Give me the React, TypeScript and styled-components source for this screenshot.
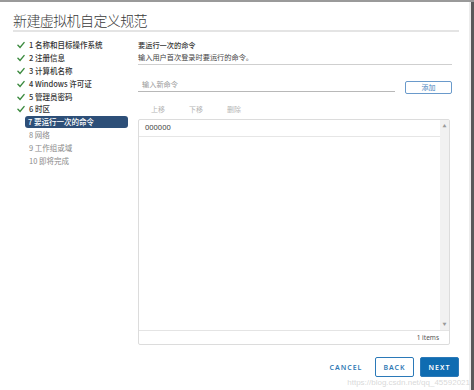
import React from 'react';
import styled, { createGlobalStyle } from 'styled-components';

const GlobalStyle = createGlobalStyle`
  html, body {
    margin: 0;
    padding: 0;
    background: #ffffff;
  }
  body {
    font-family: "Noto Sans CJK SC", "Noto Sans", "Liberation Sans", sans-serif;
    color: #333;
  }
`;

const Screen = styled.div`
  width: 474px;
  height: 390px;
  position: relative;
  overflow: hidden;
  background: #fff;
  border-top: 2px solid #9a9a9a;
  box-sizing: border-box;
  display: flex;
`;

const Dialog = styled.div`
  flex: 1;
  display: flex;
  flex-direction: column;
  padding: 0 10px 0 13px;
  border-right: 2px solid #ececec;
`;

const EdgeBar = styled.div`
  width: 3px;
  background: #5a5a5a;
`;

const Title = styled.h1`
  margin: 0;
  padding: 8px 0 0;
  font-size: 14px;
  letter-spacing: -0.6px;
  font-weight: 300;
  line-height: 20px;
  color: #3a3a3a;
  border-bottom: 2px solid #e4e4e4;
`;

const Body = styled.div`
  display: flex;
  flex: 1;
  padding-top: 7px;
`;

const Nav = styled.ul`
  list-style: none;
  margin: 0;
  padding: 0 0 0 4px;
  width: 121px;
  display: flex;
  flex-direction: column;
`;

const NavItem = styled.li<{ $state: 'done' | 'active' | 'todo' }>`
  display: flex;
  align-items: center;
  height: 12.8px;
  font-size: 7.5px;
  line-height: 12px;
  white-space: nowrap;
  color: ${p => (p.$state === 'todo' ? '#8a8a8a' : p.$state === 'active' ? '#fff' : '#333')};
  font-weight: ${p => (p.$state === 'todo' ? 400 : 500)};
  padding-left: ${p => (p.$state === 'done' ? '0' : '12px')};
  ${p =>
    p.$state === 'active' &&
    `
    background: #2d4f78;
    border-radius: 3px;
    padding-left: 3px;
    width: 100px;
    height: 12px;
    margin: 0.4px 0 0.4px 8px;
  `}
`;

const Check = styled.svg`
  width: 8px;
  height: 8px;
  margin-right: 4px;
  flex: none;
`;

const Content = styled.div`
  flex: 1;
  display: flex;
  flex-direction: column;
`;

const Heading = styled.div`
  font-size: 7.2px;
  line-height: 12px;
  color: #333;
  font-weight: 500;
`;

const Sub = styled.div`
  font-size: 7.2px;
  line-height: 12px;
  color: #444;
  padding-bottom: 1px;
  border-bottom: 1px solid #cfcfcf;
  margin-right: 7px;
`;

const InputRow = styled.div`
  display: flex;
  align-items: flex-end;
  margin-top: 13px;
  gap: 10px;
`;

const CommandInput = styled.div`
  flex: 1;
  font-size: 7.2px;
  color: #9a9a9a;
  padding: 0 0 1px 4px;
  line-height: 12px;
  border-bottom: 1px solid #b8b8b8;
`;

const AddButton = styled.button`
  width: 47px;
  height: 13px;
  margin-right: 7px;
  margin-bottom: -2px;
  padding: 0;
  border: 1px solid #6a9acb;
  border-radius: 2px;
  background: #fff;
  color: #4a86c0;
  font-family: inherit;
  font-size: 7px;
  line-height: 11px;
`;

const Actions = styled.div`
  display: flex;
  gap: 24px;
  padding: 0 0 0 13px;
  margin-top: 11px;
  height: 12px;
  font-size: 7px;
  line-height: 12px;
  color: #b5b5b5;
`;

const Table = styled.div`
  margin-top: 4px;
  margin-right: 9px;
  height: 226px;
  box-sizing: border-box;
  border: 1px solid #dcdcdc;
  border-radius: 2px;
  display: flex;
  flex-direction: column;
`;

const TableBody = styled.div`
  flex: 1;
  display: flex;
`;

const Rows = styled.div`
  flex: 1;
`;

const Row = styled.div`
  height: 17px;
  padding-left: 6px;
  font-size: 7.5px;
  line-height: 14px;
  color: #444;
  border-bottom: 1px solid #e6e6e6;
  font-family: "Noto Sans", "Liberation Sans", sans-serif;
  box-sizing: border-box;
`;

const Scroll = styled.div`
  width: 9px;
  background: #f1f1f1;
  display: flex;
  flex-direction: column;
  justify-content: space-between;
  align-items: center;
  padding: 3px 0;
  font-size: 4px;
  color: #999;
`;

const Footer = styled.div`
  height: 13px;
  border-top: 1px solid #e4e4e4;
  font-size: 6.5px;
  line-height: 13px;
  text-align: right;
  padding-right: 10px;
  color: #555;
  font-family: "Noto Sans", "Liberation Sans", sans-serif;
`;

const ButtonBar = styled.div`
  display: flex;
  justify-content: flex-end;
  align-items: center;
  gap: 6px;
  height: 20px;
  margin-top: 12px;
`;

const FlatButton = styled.button<{ $variant: 'link' | 'outline' | 'solid' }>`
  height: 20px;
  width: ${p => (p.$variant === 'link' ? '46px' : '39px')};
  padding: 0;
  border-radius: 2px;
  font-family: "Noto Sans", "Liberation Sans", sans-serif;
  font-size: 7px;
  font-weight: 600;
  letter-spacing: 1px;
  border: 1px solid ${p => (p.$variant === 'link' ? 'transparent' : '#2b79b8')};
  background: ${p => (p.$variant === 'solid' ? '#0f6cb1' : '#fff')};
  color: ${p => (p.$variant === 'solid' ? '#fff' : '#3079b5')};
`;

const Watermark = styled.div`
  position: absolute;
  right: 4px;
  bottom: 2px;
  font-size: 8px;
  line-height: 10px;
  color: rgba(200, 200, 200, 0.7);
  font-family: "Liberation Sans", sans-serif;
`;

const steps = [
  '1 名称和目标操作系统',
  '2 注册信息',
  '3 计算机名称',
  '4 Windows 许可证',
  '5 管理员密码',
  '6 时区',
  '7 要运行一次的命令',
  '8 网络',
  '9 工作组或域',
  '10 即将完成',
];

const CheckIcon = () => (
  <Check viewBox="0 0 10 10">
    <path d="M1.2 5.4 L3.8 8 L8.8 2" fill="none" stroke="#3b8a3e" strokeWidth="1.8" strokeLinecap="round" />
  </Check>
);

const App = () => {
  return (
    <>
      <GlobalStyle />
      <Screen>
        <Dialog>
          <Title>新建虚拟机自定义规范</Title>
          <Body>
            <Nav>
              {steps.map((s, i) => {
                const state = i < 6 ? 'done' : i === 6 ? 'active' : 'todo';
                return (
                  <NavItem key={s} $state={state}>
                    {state === 'done' && <CheckIcon />}
                    {s}
                  </NavItem>
                );
              })}
            </Nav>
            <Content>
              <Heading>要运行一次的命令</Heading>
              <Sub>输入用户首次登录时要运行的命令。</Sub>
              <InputRow>
                <CommandInput>输入新命令</CommandInput>
                <AddButton>添加</AddButton>
              </InputRow>
              <Actions>
                <span>上移</span>
                <span>下移</span>
                <span>删除</span>
              </Actions>
              <Table>
                <TableBody>
                  <Rows>
                    <Row>000000</Row>
                  </Rows>
                  <Scroll>
                    <span>▲</span>
                    <span>▼</span>
                  </Scroll>
                </TableBody>
                <Footer>1 items</Footer>
              </Table>
              <ButtonBar>
                <FlatButton $variant="link">CANCEL</FlatButton>
                <FlatButton $variant="outline">BACK</FlatButton>
                <FlatButton $variant="solid">NEXT</FlatButton>
              </ButtonBar>
            </Content>
          </Body>
        </Dialog>
        <EdgeBar />
        <Watermark>https://blog.csdn.net/qq_45592021</Watermark>
      </Screen>
    </>
  );
};

export default App;
